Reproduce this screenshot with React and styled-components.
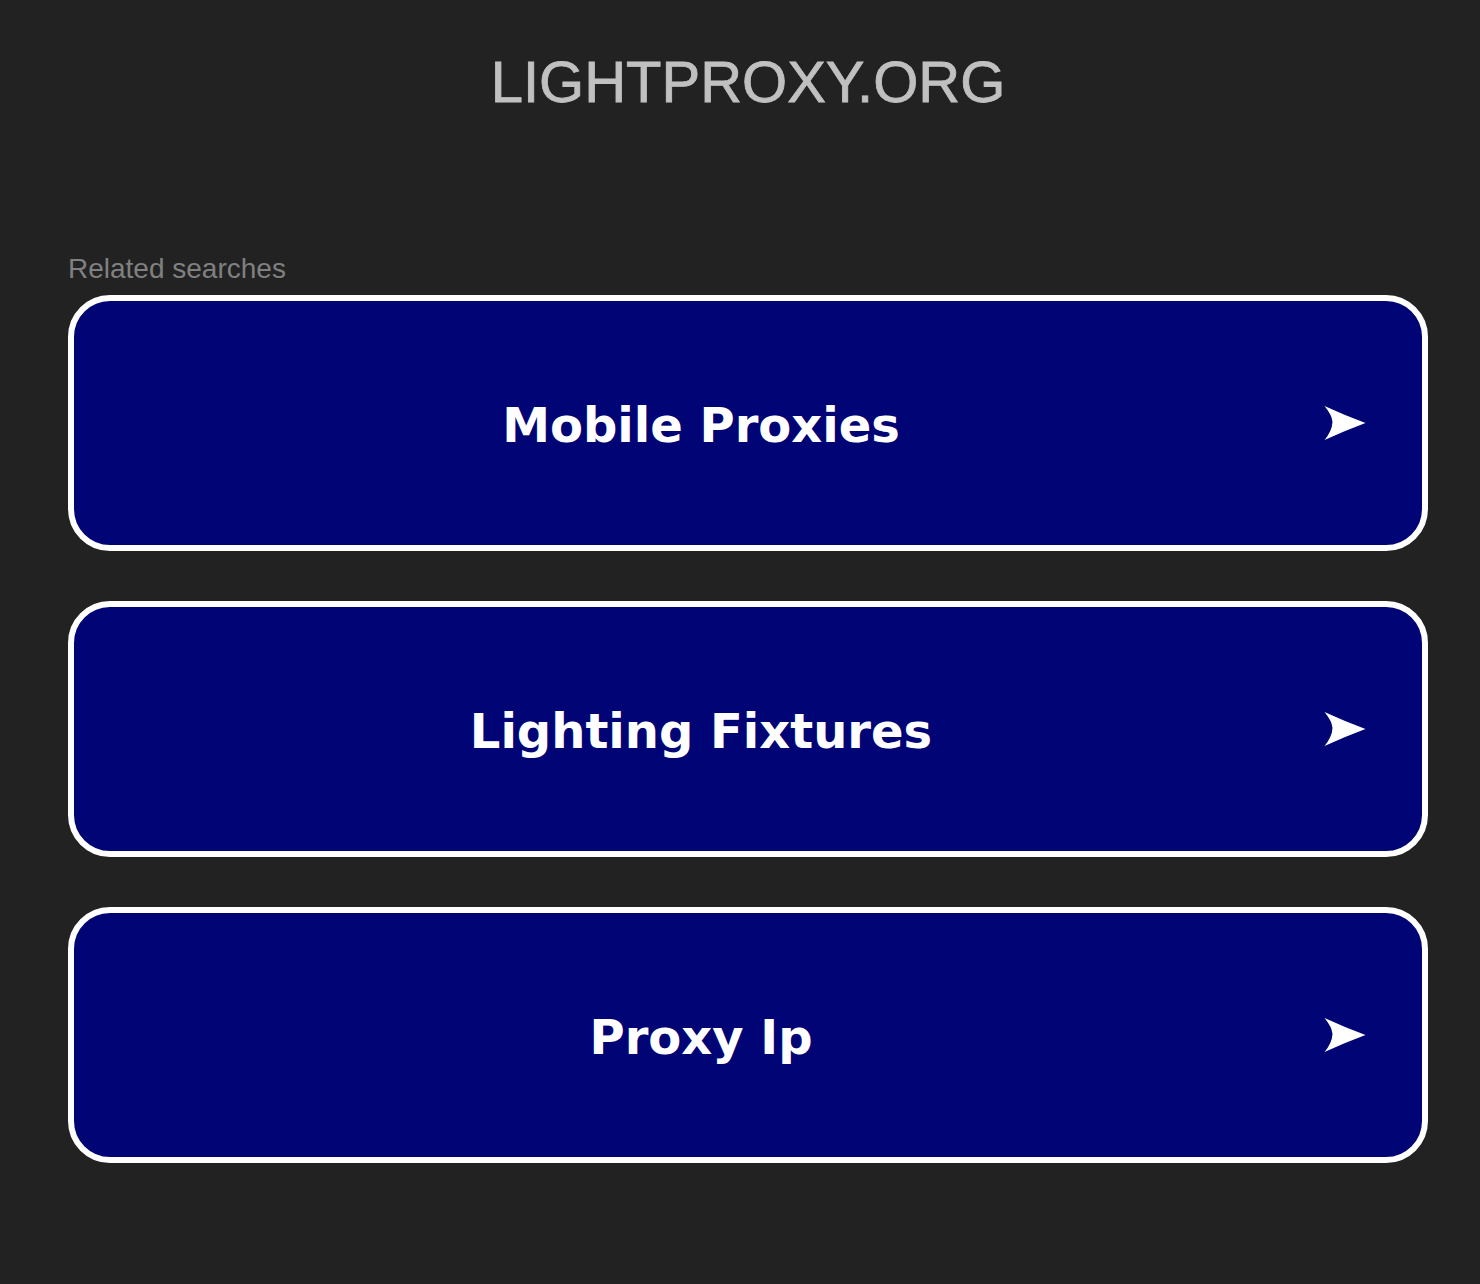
import React from "react";
import styled, { createGlobalStyle } from "styled-components";

const searches = ["Mobile Proxies", "Lighting Fixtures", "Proxy Ip"];

const GlobalStyle = createGlobalStyle`
	html, body {
		margin: 0;
		padding: 0;
		background: #222222;
	}
`;

const Arrow = () => (
	<svg width="42" height="36" viewBox="0 0 42 36">
		<path d="M0.5 1 Q20 10 41.5 18 Q20 26 0.5 35 Q8 26 8.5 17 Q8 10 0.5 1 Z" fill="#ffffff" />
	</svg>
);

const App = () => {
	return (
		<Page>
			<GlobalStyle />
			<Domain>LIGHTPROXY.ORG</Domain>
			<Section>
				<Heading>Related searches</Heading>
				<List>
					{searches.map((s) => (
						<Link key={s} href="#">
							<LinkText>{s}</LinkText>
							<ArrowBox>
								<Arrow />
							</ArrowBox>
						</Link>
					))}
				</List>
			</Section>
		</Page>
	);
};

export default App;

const Page = styled.div`
	min-height: 1284px;
	box-sizing: border-box;
	padding: 48px 52px 0 68px;
	font-family: "Liberation Sans", Arial, sans-serif;
`;

const Domain = styled.h1`
	margin: 0;
	text-align: center;
	color: #c0c0c0;
	font-size: 58px;
	font-weight: 400;
	line-height: 68px;
	-webkit-text-stroke: 0.8px #c0c0c0;
`;

const Section = styled.div`
	margin-top: 138px;
`;

const Heading = styled.div`
	color: #808080;
	font-size: 28px;
	line-height: 30px;
	margin-bottom: 11px;
`;

const List = styled.div`
	display: flex;
	flex-direction: column;
	gap: 50px;
`;

const Link = styled.a`
	display: flex;
	align-items: center;
	height: 256px;
	box-sizing: border-box;
	background: #000474;
	border: 6px solid #ffffff;
	border-radius: 42px;
	text-decoration: none;
`;

const LinkText = styled.span`
	flex: 1;
	text-align: center;
	color: #ffffff;
	font-family: "DejaVu Sans", Verdana, sans-serif;
	font-weight: 700;
	font-size: 48px;
	padding-top: 4px;
`;

const ArrowBox = styled.span`
	display: flex;
	align-items: center;
	width: 94px;
	svg {
		margin-left: -4px;
	}
`;
